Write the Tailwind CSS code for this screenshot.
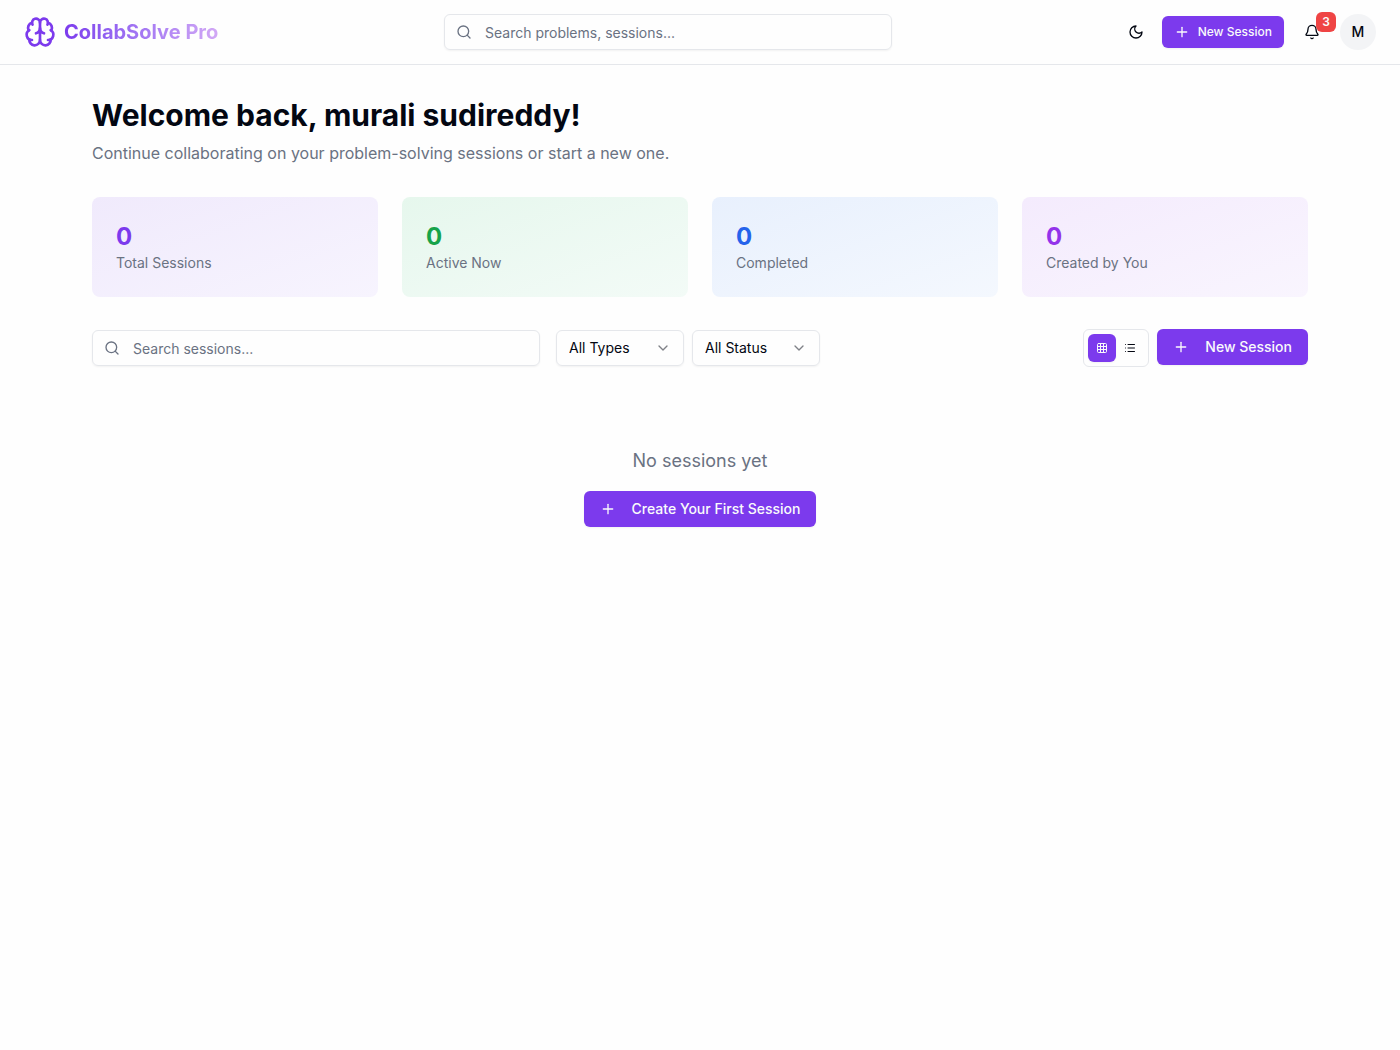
<!DOCTYPE html>
<html lang="en">
  <head>
    <meta charset="UTF-8" />
    <meta name="viewport" content="width=device-width, initial-scale=1.0" />
    <title>CollabSolve Pro</title>
    <script src="https://cdn.jsdelivr.net/npm/@tailwindcss/browser@4"></script>
  </head>
  <body class="min-h-screen bg-[#fefefe] font-['Inter',sans-serif] text-[#030712]">
    <!-- Header -->
    <header class="border-b border-gray-200">
      <div class="flex h-16 items-center justify-between px-6">
        <a href="#" class="flex items-center gap-2">
          <svg class="size-8 text-[#7c3aed]" viewBox="0 0 24 24" fill="none" stroke="currentColor" stroke-width="2" stroke-linecap="round" stroke-linejoin="round" aria-hidden="true">
            <path d="M12 18V5" />
            <path d="M15 13a4.17 4.17 0 0 1-3-4 4.17 4.17 0 0 1-3 4" />
            <path d="M17.598 6.5A3 3 0 1 0 12 5a3 3 0 1 0-5.598 1.5" />
            <path d="M17.997 5.125a4 4 0 0 1 2.526 5.77" />
            <path d="M18 18a4 4 0 0 0 2-7.464" />
            <path d="M19.967 17.483A4 4 0 1 1 12 18a4 4 0 1 1-7.967-.517" />
            <path d="M6 18a4 4 0 0 1-2-7.464" />
            <path d="M6.003 5.125a4 4 0 0 0-2.526 5.77" />
          </svg>
          <span class="bg-linear-to-r from-[#7c3aed] to-[#d2a8f5] bg-clip-text text-xl font-bold text-transparent">CollabSolve Pro</span>
        </a>

        <div class="relative w-full max-w-md">
          <svg class="absolute top-1/2 left-3 size-4 -translate-y-1/2 text-gray-500" viewBox="0 0 24 24" fill="none" stroke="currentColor" stroke-width="2" stroke-linecap="round" stroke-linejoin="round" aria-hidden="true">
            <circle cx="11" cy="11" r="8" />
            <path d="m21 21-4.3-4.3" />
          </svg>
          <input type="text" aria-label="Search problems and sessions" placeholder="Search problems, sessions..." class="h-9 w-full rounded-md border border-gray-200 py-1 pr-3 pl-10 text-sm shadow-xs placeholder:text-gray-500" />
        </div>

        <div class="flex items-center gap-2">
          <button type="button" aria-label="Toggle theme" class="flex size-9 items-center justify-center rounded-md">
            <svg class="size-4" viewBox="0 0 24 24" fill="none" stroke="currentColor" stroke-width="2" stroke-linecap="round" stroke-linejoin="round" aria-hidden="true">
              <path d="M12 3a6 6 0 0 0 9 9 9 9 0 1 1-9-9Z" />
            </svg>
          </button>
          <button type="button" class="flex h-8 items-center gap-2 rounded-md bg-[#7c3aed] px-3 text-xs font-medium text-gray-50 shadow-xs">
            <svg class="size-4" viewBox="0 0 24 24" fill="none" stroke="currentColor" stroke-width="2" stroke-linecap="round" stroke-linejoin="round" aria-hidden="true">
              <path d="M5 12h14" />
              <path d="M12 5v14" />
            </svg>
            New Session
          </button>
          <button type="button" aria-label="Notifications" class="relative flex h-8 items-center rounded-md px-3">
            <svg class="size-4" viewBox="0 0 24 24" fill="none" stroke="currentColor" stroke-width="2" stroke-linecap="round" stroke-linejoin="round" aria-hidden="true">
              <path d="M10.268 21a2 2 0 0 0 3.464 0" />
              <path d="M3.262 15.326A1 1 0 0 0 4 17h16a1 1 0 0 0 .74-1.673C19.41 13.956 18 12.499 18 8A6 6 0 0 0 6 8c0 4.499-1.411 5.956-2.738 7.326" />
            </svg>
            <span class="absolute -top-1 -right-1 flex size-5 items-center justify-center rounded-md bg-[#ef4444] text-xs font-semibold text-gray-50">3</span>
          </button>
          <button type="button" aria-label="Account" class="flex size-9 items-center justify-center rounded-full bg-gray-100 text-sm font-medium">M</button>
        </div>
      </div>
    </header>

    <!-- Dashboard -->
    <main class="mx-auto max-w-7xl p-8">
      <h1 class="mb-2 text-3xl font-bold">Welcome back, murali sudireddy!</h1>
      <p class="mb-8 text-gray-500">Continue collaborating on your problem-solving sessions or start a new one.</p>

      <!-- Stats -->
      <div class="mb-8 grid grid-cols-2 gap-6 md:grid-cols-4">
        <div class="rounded-lg bg-linear-to-br from-[#f0eafc] to-[#f7f4fe] p-6">
          <div class="text-2xl font-bold text-[#7c3aed]">0</div>
          <div class="text-sm text-gray-500">Total Sessions</div>
        </div>
        <div class="rounded-lg bg-linear-to-br from-[#e6f7ed] to-[#f3fbf7] p-6">
          <div class="text-2xl font-bold text-[#16a34a]">0</div>
          <div class="text-sm text-gray-500">Active Now</div>
        </div>
        <div class="rounded-lg bg-linear-to-br from-[#e8f0fd] to-[#f4f8fe] p-6">
          <div class="text-2xl font-bold text-[#2563eb]">0</div>
          <div class="text-sm text-gray-500">Completed</div>
        </div>
        <div class="rounded-lg bg-linear-to-br from-[#f4ebfd] to-[#f9f5fe] p-6">
          <div class="text-2xl font-bold text-[#9333ea]">0</div>
          <div class="text-sm text-gray-500">Created by You</div>
        </div>
      </div>

      <!-- Filters -->
      <div class="mb-8 flex flex-wrap items-center justify-between gap-4">
        <div class="flex flex-1 items-center gap-4">
          <div class="relative w-full max-w-md">
            <svg class="absolute top-1/2 left-3 size-4 -translate-y-1/2 text-gray-500" viewBox="0 0 24 24" fill="none" stroke="currentColor" stroke-width="2" stroke-linecap="round" stroke-linejoin="round" aria-hidden="true">
              <circle cx="11" cy="11" r="8" />
              <path d="m21 21-4.3-4.3" />
            </svg>
            <input type="text" aria-label="Search sessions" placeholder="Search sessions..." class="h-9 w-full rounded-md border border-gray-200 py-1 pr-3 pl-10 text-sm shadow-xs placeholder:text-gray-500" />
          </div>
          <div class="flex gap-2">
            <div class="relative w-32">
              <select aria-label="Session type" class="h-9 w-full appearance-none rounded-md border border-gray-200 px-3 text-sm shadow-xs">
                <option>All Types</option>
              </select>
              <svg class="pointer-events-none absolute top-1/2 right-[13px] size-4 -translate-y-1/2 opacity-50" viewBox="0 0 24 24" fill="none" stroke="currentColor" stroke-width="2" stroke-linecap="round" stroke-linejoin="round" aria-hidden="true">
                <path d="m6 9 6 6 6-6" />
              </svg>
            </div>
            <div class="relative w-32">
              <select aria-label="Session status" class="h-9 w-full appearance-none rounded-md border border-gray-200 px-3 text-sm shadow-xs">
                <option>All Status</option>
              </select>
              <svg class="pointer-events-none absolute top-1/2 right-[13px] size-4 -translate-y-1/2 opacity-50" viewBox="0 0 24 24" fill="none" stroke="currentColor" stroke-width="2" stroke-linecap="round" stroke-linejoin="round" aria-hidden="true">
                <path d="m6 9 6 6 6-6" />
              </svg>
            </div>
          </div>
        </div>

        <div class="flex items-start gap-2">
          <div class="flex rounded-md border border-gray-200 p-1">
            <button type="button" aria-label="Grid view" aria-pressed="true" class="flex size-7 items-center justify-center rounded-md bg-[#7c3aed] text-gray-50 shadow-xs">
              <svg class="size-3" viewBox="0 0 24 24" fill="none" stroke="currentColor" stroke-width="2" stroke-linecap="round" stroke-linejoin="round" aria-hidden="true">
                <rect width="18" height="18" x="3" y="3" rx="2" />
                <path d="M3 9h18" />
                <path d="M3 15h18" />
                <path d="M9 3v18" />
                <path d="M15 3v18" />
              </svg>
            </button>
            <button type="button" aria-label="List view" aria-pressed="false" class="flex size-7 items-center justify-center rounded-md">
              <svg class="size-3" viewBox="0 0 24 24" fill="none" stroke="currentColor" stroke-width="2" stroke-linecap="round" stroke-linejoin="round" aria-hidden="true">
                <path d="M3 12h.01" />
                <path d="M3 19h.01" />
                <path d="M3 5h.01" />
                <path d="M8 12h13" />
                <path d="M8 19h13" />
                <path d="M8 5h13" />
              </svg>
            </button>
          </div>
          <button type="button" class="flex h-9 items-center gap-4 rounded-md bg-[#7c3aed] px-4 text-sm font-medium text-gray-50 shadow-xs">
            <svg class="size-4" viewBox="0 0 24 24" fill="none" stroke="currentColor" stroke-width="2" stroke-linecap="round" stroke-linejoin="round" aria-hidden="true">
              <path d="M5 12h14" />
              <path d="M12 5v14" />
            </svg>
            New Session
          </button>
        </div>
      </div>

      <!-- Empty state -->
      <div class="flex flex-col items-center gap-4 py-12">
        <p class="text-lg text-gray-500">No sessions yet</p>
        <button type="button" class="flex h-9 items-center gap-4 rounded-md bg-[#7c3aed] px-4 text-sm font-medium text-gray-50 shadow-xs">
          <svg class="size-4" viewBox="0 0 24 24" fill="none" stroke="currentColor" stroke-width="2" stroke-linecap="round" stroke-linejoin="round" aria-hidden="true">
            <path d="M5 12h14" />
            <path d="M12 5v14" />
          </svg>
          Create Your First Session
        </button>
      </div>
    </main>
  </body>
</html>
